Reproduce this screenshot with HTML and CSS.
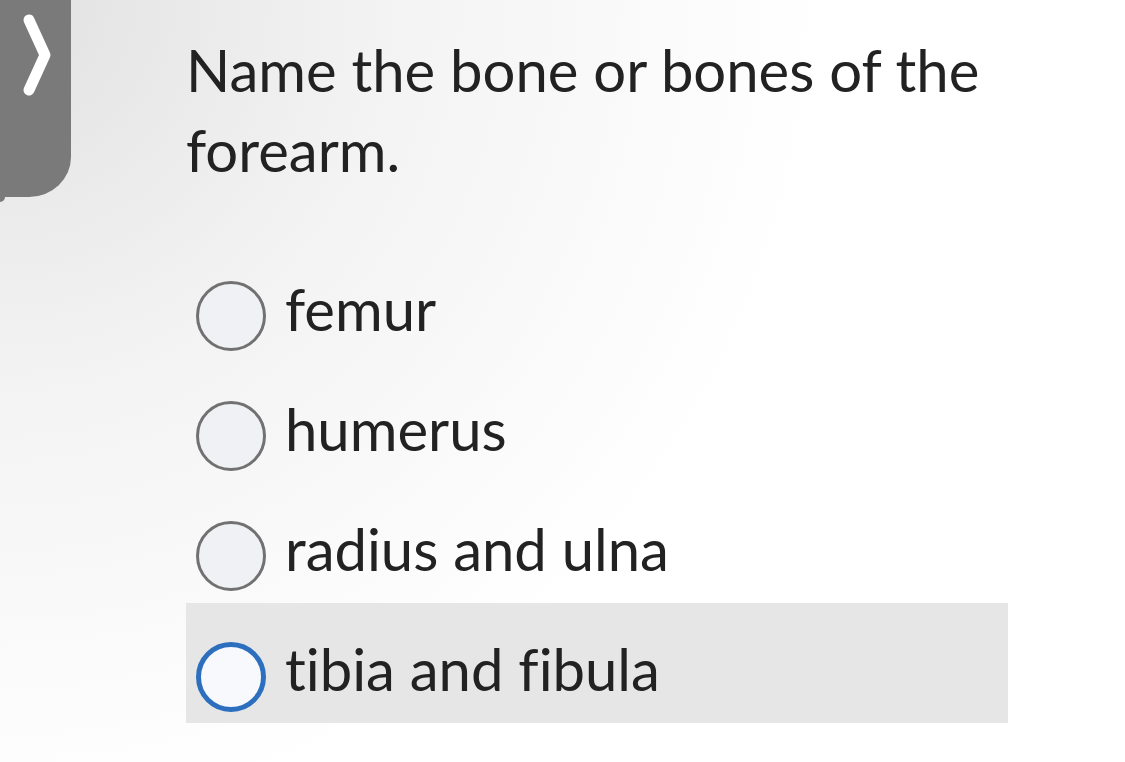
FILE: index.html
```html
<!DOCTYPE html>
<html lang="en">
<head>
<meta charset="utf-8">
<title>Quiz question</title>
<link rel="stylesheet" href="styles.css">
</head>
<body>
<div class="page">
  <aside class="tab">
    <svg class="chevron" width="71" height="110" viewBox="0 0 71 110" aria-hidden="true">
      <polyline points="29,20 45,55 29,90" fill="none" stroke="#ffffff" stroke-width="11" stroke-linecap="round" stroke-linejoin="round"/>
    </svg>
    <span class="notch"></span>
  </aside>
  <main class="question">
    <h1 class="prompt">Name the bone or bones of the forearm.</h1>
    <div class="options">
      <label class="option"><span class="radio"></span><span class="label">femur</span></label>
      <label class="option"><span class="radio"></span><span class="label">humerus</span></label>
      <label class="option"><span class="radio"></span><span class="label">radius and ulna</span></label>
      <label class="option option-focus"><span class="radio radio-focus"></span><span class="label">tibia and fibula</span></label>
    </div>
  </main>
</div>
</body>
</html>
```

FILE: styles.css
```css
html, body {
  margin: 0;
  padding: 0;
  height: 100%;
}
body {
  font-family: Lato, "Noto Sans", sans-serif;
  font-variant-ligatures: none;
  color: #222222;
  background: radial-gradient(circle at 0 0, #e1e1e1 0px, #f3f3f3 380px, #ffffff 820px);
  overflow: hidden;
}
.page {
  display: flex;
  align-items: flex-start;
  height: 762px;
}
.tab {
  position: relative;
  flex: 0 0 71px;
  width: 71px;
  height: 197px;
  background: #7a7a7a;
  border-bottom-right-radius: 42px 40px;
}
.chevron {
  display: block;
}
.notch {
  position: absolute;
  left: 0;
  top: 196px;
  width: 5px;
  height: 6px;
  background: #7a7a7a;
  border-bottom-right-radius: 5px;
}
.question {
  margin-left: 115px;
  width: 822px;
}
.prompt {
  margin: 30px 0 0 0;
  padding-right: 10px;
  font-size: 58px;
  font-weight: 400;
  line-height: 80px;
  color: #222222;
}
.options {
  margin-top: 53px;
  display: flex;
  flex-direction: column;
}
.option {
  display: flex;
  align-items: flex-start;
  gap: 19px;
  height: 120px;
  box-sizing: border-box;
  padding: 26px 0 14px 10px;
}
.option-focus {
  background: #e6e6e6;
}
.radio {
  flex: 0 0 auto;
  box-sizing: border-box;
  width: 70px;
  height: 70px;
  margin-top: 12px;
  border-radius: 50%;
  border: 3px solid #717171;
  background: #f0f1f5;
}
.radio-focus {
  border: 5px solid #2c6fbf;
  background: #f8f9fd;
  margin-top: 13px;
}
.label {
  font-size: 58px;
  line-height: 80px;
}
```
